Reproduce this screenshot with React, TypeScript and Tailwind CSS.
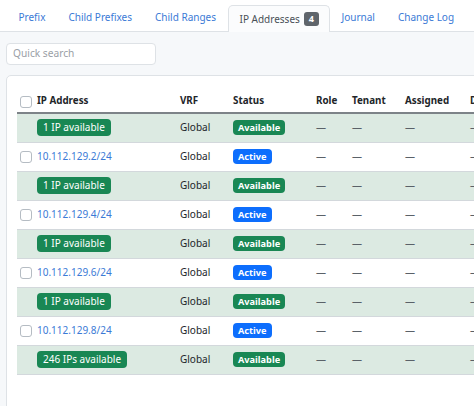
import React from 'react';

type Row =
  | { kind: 'free'; label: string }
  | { kind: 'ip'; address: string };

const rows: Row[] = [
  { kind: 'free', label: '1 IP available' },
  { kind: 'ip', address: '10.112.129.2/24' },
  { kind: 'free', label: '1 IP available' },
  { kind: 'ip', address: '10.112.129.4/24' },
  { kind: 'free', label: '1 IP available' },
  { kind: 'ip', address: '10.112.129.6/24' },
  { kind: 'free', label: '1 IP available' },
  { kind: 'ip', address: '10.112.129.8/24' },
  { kind: 'free', label: '246 IPs available' },
];

const tabs = ['Prefix', 'Child Prefixes', 'Child Ranges', 'IP Addresses', 'Journal', 'Change Log'];

const Checkbox: React.FC = () => (
  <span className="block w-[12px] h-[12px] rounded-[3px] border border-[#b5bcc3] bg-white" />
);

const Dash: React.FC = () => <span className="text-[#5a6168]">—</span>;

const App: React.FC = () => {
  return (
    <div className="w-[474px] h-[406px] overflow-hidden bg-[#f6f8fa] text-[#212529] font-['Noto_Sans',sans-serif]">
      {/* Tabs */}
      <div className="bg-white h-[32px] border-b border-[#dee2e6] flex items-end pl-[7px] whitespace-nowrap">
        {tabs.map((t) =>
          t === 'IP Addresses' ? (
            <div
              key={t}
              className="shrink-0 h-[27px] mb-[-1px] pl-[11px] pr-[10px] flex items-center gap-[4px] bg-[#fbfcfd] border border-b-0 border-[#dee2e6] rounded-t-[5px] text-[10px] text-[#495057]"
            >
              <span>IP Addresses</span>
              <span className="bg-[#5f656b] text-white text-[9px] font-bold rounded-[3px] px-[5px] h-[14px] leading-[14px]">4</span>
            </div>
          ) : (
            <div key={t} className="shrink-0 h-[27px] px-[11.5px] flex items-center text-[10px] text-[#3b7ad6]">
              {t}
            </div>
          )
        )}
      </div>

      {/* Search */}
      <div className="pt-[11px] pl-[6px]">
        <div className="w-[150px] h-[22px] bg-white border border-[#dee2e6] rounded-[4px] flex items-center px-[6px] text-[10.2px] text-[#9aa0a6]">
          Quick search
        </div>
      </div>

      {/* Card */}
      <div className="mt-[10px] ml-[6px] w-[560px] h-[400px] bg-white border border-[#dee2e6] rounded-[5px] pl-[10px] pt-[15px]">
        <table className="table-fixed border-collapse text-[10px] w-[560px] whitespace-nowrap">
          <colgroup>
            <col className="w-[20px]" />
            <col className="w-[143px]" />
            <col className="w-[53px]" />
            <col className="w-[83px]" />
            <col className="w-[36px]" />
            <col className="w-[53px]" />
            <col className="w-[65px]" />
            <col className="w-[107px]" />
          </colgroup>
          <thead>
            <tr className="h-[22px] border-b-2 border-[#7d8388] text-left font-bold text-[9.8px]">
              <th className="pl-[3px] align-middle">
                <Checkbox />
              </th>
              <th>IP Address</th>
              <th>VRF</th>
              <th>Status</th>
              <th>Role</th>
              <th>Tenant</th>
              <th>Assigned</th>
              <th>Description</th>
            </tr>
          </thead>
          <tbody>
            {rows.map((r, i) => (
              <tr
                key={i}
                className={`h-[29px] border-b border-[#d3d8dc] ${r.kind === 'free' ? 'bg-[#dceae2]' : 'bg-white'}`}
              >
                <td className="pl-[3px] align-middle">{r.kind === 'ip' && <Checkbox />}</td>
                <td>
                  {r.kind === 'free' ? (
                    <span className="inline-block bg-[#198754] text-white rounded-[4px] px-[6px] h-[17px] leading-[17px]">
                      {r.label}
                    </span>
                  ) : (
                    <span className="text-[#3b7ad6]">{r.address}</span>
                  )}
                </td>
                <td>Global</td>
                <td>
                  {r.kind === 'free' ? (
                    <span className="inline-block bg-[#198754] text-white font-bold text-[9.2px] rounded-[4px] px-[5px] h-[15px] leading-[15px]">
                      Available
                    </span>
                  ) : (
                    <span className="inline-block bg-[#0d6efd] text-white font-bold text-[9.2px] rounded-[4px] px-[5px] h-[15px] leading-[15px]">
                      Active
                    </span>
                  )}
                </td>
                <td><Dash /></td>
                <td><Dash /></td>
                <td><Dash /></td>
                <td><Dash /></td>
              </tr>
            ))}
          </tbody>
        </table>
      </div>
    </div>
  );
};

export default App;
